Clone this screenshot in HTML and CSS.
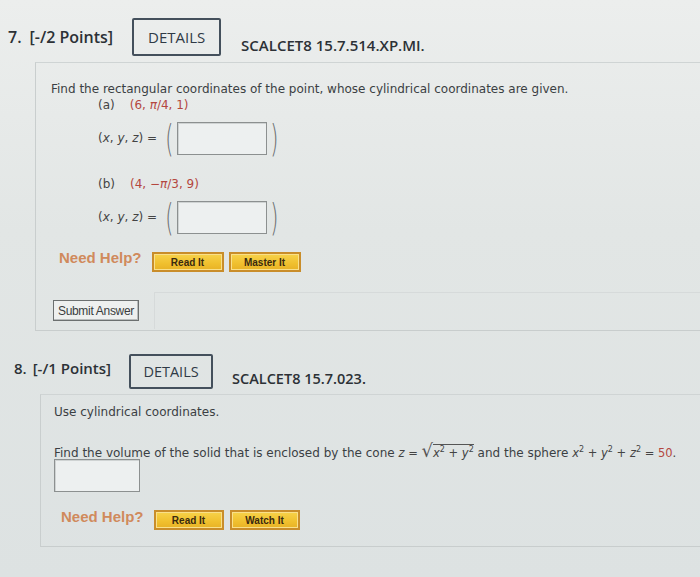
FILE: index.html
```html
<!DOCTYPE html>
<html>
<head>
<meta charset="utf-8">
<link rel="stylesheet" href="styles.css">
</head>
<body>
<div class="page">
  <section class="q q7">
    <div class="qhead">
      <span class="qnum">7.</span>
      <span class="pts">[-/2 Points]</span>
      <span class="details">DETAILS</span>
      <span class="code">SCALCET8 15.7.514.XP.MI.</span>
    </div>
    <div class="panel">
      <p class="text">Find the rectangular coordinates of the point, whose cylindrical coordinates are given.</p>
      <div class="part">
        <div class="plabel"><span class="lt">(a)</span><span class="red">(6, <i>π</i>/4, 1)</span></div>
        <div class="eq"><span class="math">(<i>x</i>, <i>y</i>, <i>z</i>) =</span><span class="paren">(</span><span class="inp"></span><span class="paren">)</span></div>
      </div>
      <div class="part partb">
        <div class="plabel"><span class="lt">(b)</span><span class="red">(4, −<i>π</i>/3, 9)</span></div>
        <div class="eq"><span class="math">(<i>x</i>, <i>y</i>, <i>z</i>) =</span><span class="paren">(</span><span class="inp"></span><span class="paren">)</span></div>
      </div>
      <div class="help">
        <span class="need">Need Help?</span>
        <span class="gbtn">Read It</span>
        <span class="gbtn">Master It</span>
      </div>
      <div class="submitrow">
        <span class="submit">Submit Answer</span>
        <span class="ghost"></span>
      </div>
    </div>
  </section>
  <section class="q q8">
    <div class="qhead">
      <span class="qnum">8.</span>
      <span class="pts">[-/1 Points]</span>
      <span class="details">DETAILS</span>
      <span class="code">SCALCET8 15.7.023.</span>
    </div>
    <div class="panel">
      <p class="text">Use cylindrical coordinates.</p>
      <p class="text vol">Find the volume of the solid that is enclosed by the cone <span class="m"><i>z</i> = <span class="sqrt">√</span><span class="rad"><i>x</i><sup>2</sup> + <i>y</i><sup>2</sup></span></span> and the sphere <span class="m"><i>x</i><sup>2</sup> + <i>y</i><sup>2</sup> + <i>z</i><sup>2</sup> = <span class="red">50</span>.</span></p>
      <span class="inp inp8"></span>
      <div class="help">
        <span class="need">Need Help?</span>
        <span class="gbtn">Read It</span>
        <span class="gbtn">Watch It</span>
      </div>
    </div>
  </section>
</div>
</body>
</html>
```
FILE: styles.css
```css
html, body {
  margin: 0;
  padding: 0;
}
body {
  width: 700px;
  height: 577px;
  overflow: hidden;
  background: linear-gradient(180deg, #eceeed 0%, #e2e6e5 40%, #dde2e2 100%);
  font-family: "DejaVu Sans", Verdana, sans-serif;
  color: #3a3d40;
}
.page {
  padding-top: 18px;
}
.qhead {
  display: flex;
  align-items: center;
  height: 38px;
  font-family: "Open Sans", sans-serif;
  font-weight: 600;
  color: #2c3136;
}
.q7 .qhead { padding-left: 8px; font-size: 16px; }
.q8 .qhead { padding-left: 14px; font-size: 15px; height: 35px; }
.qnum { margin-right: 8px; }
.q8 .qnum { margin-right: 6px; }
.q8 .qnum, .q8 .pts { margin-top: -8px; }
.details {
  box-sizing: border-box;
  height: 100%;
  display: flex;
  align-items: center;
  justify-content: center;
  border: 2px solid #44505c;
  border-radius: 2px;
  font-weight: 400;
  font-size: 15px;
  color: #2f3a46;
}
.q7 .details { width: 89px; margin-left: 19px; }
.q8 .details { width: 84px; margin-left: 18px; font-size: 14.5px; }
.code { margin-left: 20px; }
.q7 .code { margin-top: 16px; font-size: 15px; }
.q8 .code { margin-top: 14px; font-size: 14.5px; margin-left: 19px; }

.panel {
  border-top: 1px solid #cfd4d4;
  border-left: 1px solid #c9cece;
  border-bottom: 1px solid #c8cdcd;
}
.q7 .panel {
  margin: 6px 0 0 35px;
  padding: 19px 0 9px 15px;
  height: 239px;
}
.q8 {
  margin-top: 23px;
}
.q8 .panel {
  margin: 5px 0 0 40px;
  padding: 10px 0 9px 13px;
  height: 132px;
}
.text {
  margin: 0;
  font-size: 12px;
  color: #3b3f43;
}
.part { margin-left: 47px; margin-top: 2px; }
.partb { margin-top: 22px; }
.plabel { font-size: 12px; display: flex; gap: 15px; }
.lt { color: #444; }
.red { color: #b4473f; }
.eq {
  display: flex;
  align-items: center;
  margin-top: 9px;
  font-size: 12px;
}
.math { margin-right: 5px; color: #444; }
.paren { font-size: 38px; font-weight: 200; color: #6a6e70; line-height: 34px; font-family: "DejaVu Sans", sans-serif; transform: scaleX(0.55); }
.inp {
  display: inline-block;
  box-sizing: border-box;
  width: 90px;
  height: 33px;
  border: 1px solid #8c9090;
  background: #edf0f0;
  box-shadow: inset 1px 1px 0 #cfd3d3;
}
.help {
  display: flex;
  align-items: center;
  margin-top: 9px;
  margin-left: 8px;
}
.need {
  font-family: "Liberation Sans", Arial, sans-serif;
  font-weight: 700;
  font-size: 15px;
  color: #d08a5c;
  margin-right: 10px;
}
.gbtn {
  box-sizing: border-box;
  width: 72px;
  height: 20px;
  display: flex;
  align-items: center;
  justify-content: center;
  margin-right: 5px;
  margin-top: 9px;
  background: linear-gradient(180deg, #f7d24a 0%, #f0c02e 60%, #e8b226 100%);
  border: 2px solid #c98d2a;
  box-shadow: inset 0 0 0 1px #f9e08a;
  font-family: "Liberation Sans", Arial, sans-serif;
  font-weight: 700;
  font-size: 10px;
  color: #3a2a10;
}
.submitrow {
  display: flex;
  align-items: flex-start;
  margin-top: 20px;
}
.submit {
  box-sizing: border-box;
  margin-left: 2px;
  margin-top: 8px;
  width: 86px;
  height: 21px;
  display: flex;
  align-items: center;
  justify-content: center;
  border: 1px solid #6c7070;
  background: #eef0ef;
  box-shadow: inset -1px -1px 0 #b8bcbc;
  font-family: "Liberation Sans", Arial, sans-serif;
  font-size: 12px;
  letter-spacing: -0.3px;
  color: #3a3d40;
}
.ghost {
  flex: 1;
  height: 36px;
  margin-left: 15px;
  border-top: 1px solid #d6dada;
  border-left: 1px solid #d6dada;
}
.vol { margin-top: 21px; }
.m { font-family: "DejaVu Sans", sans-serif; font-size: 11.5px; color: #444; }
.sqrt { font-size: 18px; font-family: "DejaVu Sans", sans-serif; color: #555; }
.rad { border-top: 1px solid #555; padding-top: 1px; }
sup { font-size: 8px; }
.inp8 { margin-top: -2px; width: 86px; height: 33px; }
.q8 .help { margin-top: 6px; margin-left: 7px; }
.q8 .gbtn { width: 70px; margin-top: 8px; }
.q8 .gbtn + .gbtn { margin-left: 1px; }
```
